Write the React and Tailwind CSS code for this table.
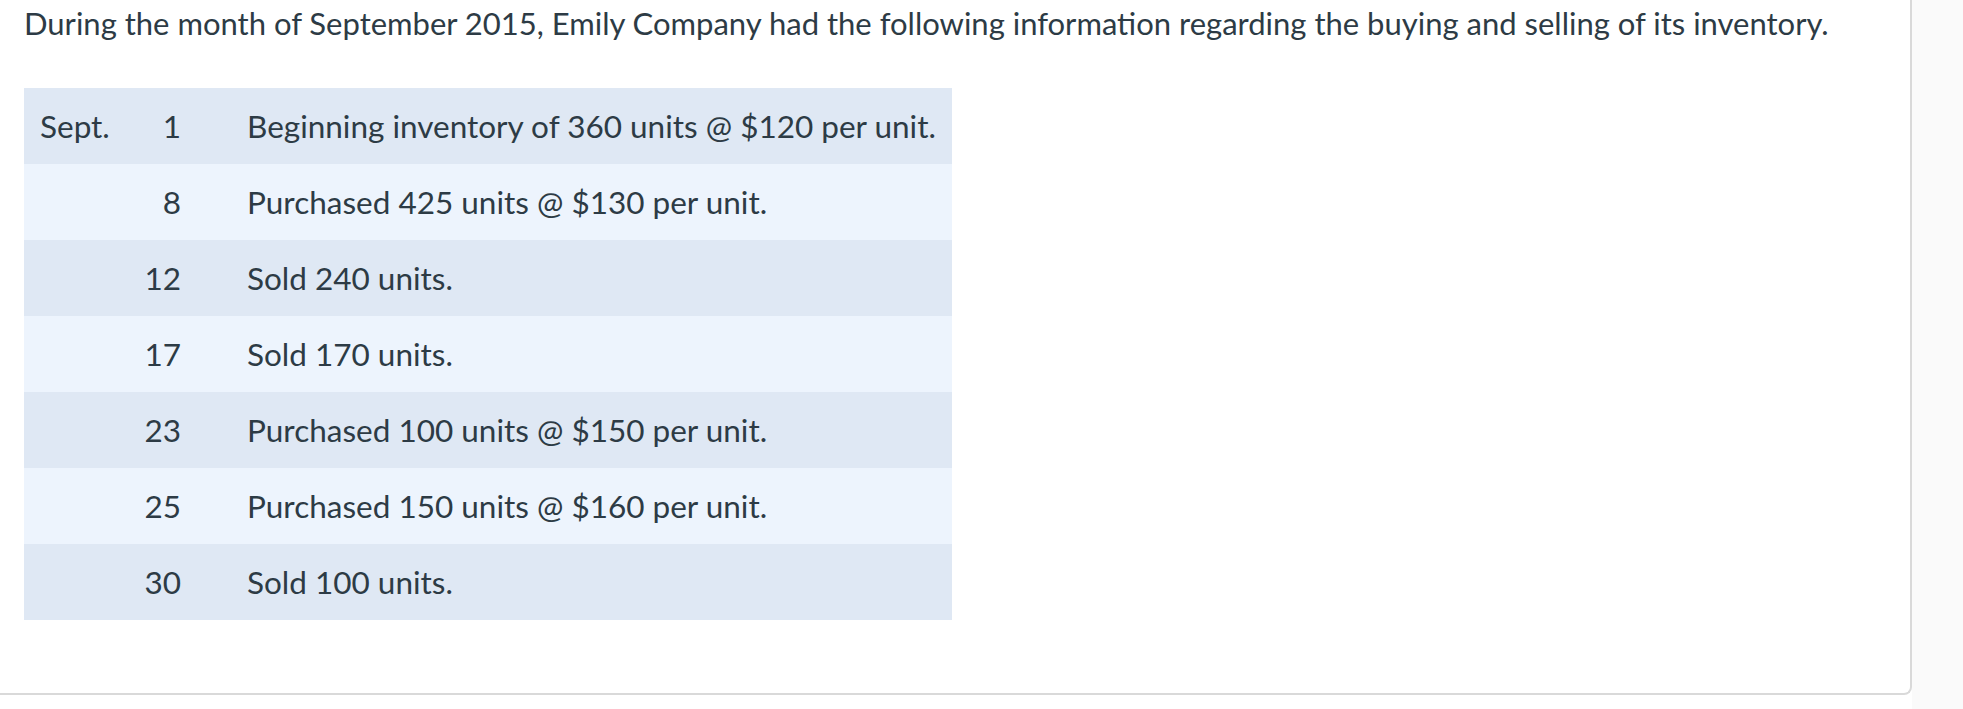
import React from "react";

const rows = [
  { m: "Sept.", d: "1", t: "Beginning inventory of 360 units @ $120 per unit." },
  { m: "", d: "8", t: "Purchased 425 units @ $130 per unit." },
  { m: "", d: "12", t: "Sold 240 units." },
  { m: "", d: "17", t: "Sold 170 units." },
  { m: "", d: "23", t: "Purchased 100 units @ $150 per unit." },
  { m: "", d: "25", t: "Purchased 150 units @ $160 per unit." },
  { m: "", d: "30", t: "Sold 100 units." },
];

export default function App() {
  return (
    <div className="flex w-[1963px] h-[709px] bg-[#fafafa] text-[#2d3b45] font-['Lato','Liberation_Sans',sans-serif] overflow-hidden">
      <div className="w-[1912px] shrink-0 bg-white h-full">
        <div className="w-full h-[695px] bg-white border-r-2 border-b-2 border-[#d9d9d9] rounded-br-[8px]">
          <p className="pt-[3px] pl-[24px] text-[31px] leading-[40px]">
            During the month of September 2015, Emily Company had the following information regarding the buying and selling of its inventory.
          </p>
          <div className="mt-[45px] ml-[24px] w-[928px] flex flex-col text-[31.5px] leading-[40px]">
            {rows.map((r, i) => (
              <div
                key={i}
                className={
                  "flex items-center h-[76px] " +
                  (i % 2 === 0 ? "bg-[#dfe8f4]" : "bg-[#edf4fd]")
                }
              >
                <div className="w-[104px] pl-[16px]">{r.m}</div>
                <div className="w-[53px] text-right">{r.d}</div>
                <div className="pl-[66px]">{r.t}</div>
              </div>
            ))}
          </div>
        </div>
      </div>
    </div>
  );
}
